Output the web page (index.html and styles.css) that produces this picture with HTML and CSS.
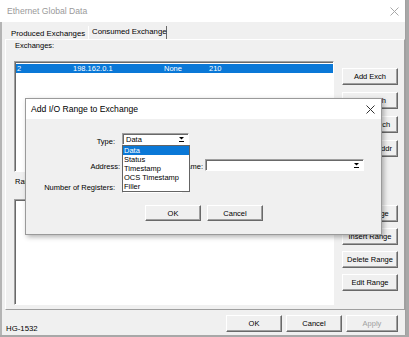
FILE: index.html
```html
<!DOCTYPE html>
<html lang="en">
<head>
    <meta charset="UTF-8">
    <title>Ethernet Global Data</title>
    <link rel="stylesheet" href="styles.css">
</head>
<body>
    <div class="window">
        <div class="titlebar">
            <span class="title">Ethernet Global Data</span>
            <svg class="close" width="9" height="9" viewBox="0 0 9 9"><path d="M0.5 0.5l8 8M8.5 0.5l-8 8" stroke="#a8a8a8" stroke-width="1"/></svg>
        </div>
        <div class="client">
            <div class="tabs">
                <span class="tab">Produced Exchanges</span>
                <span class="tab active">Consumed Exchange</span>
            </div>
            <div class="panel">
                <div class="label">Exchanges:</div>
                <div class="section section-top">
                    <div class="list list-top">
                        <div class="row selected">
                            <span class="c1">2</span>
                            <span class="c2">198.162.0.1</span>
                            <span class="c3">None</span>
                            <span class="c4">210</span>
                        </div>
                    </div>
                    <div class="btns btns-top">
                        <button class="btn">Add Exch</button>
                        <button class="btn">Edit Exch</button>
                        <button class="btn">Delete Exch</button>
                        <button class="btn">Change Addr</button>
                    </div>
                </div>
                <div class="label label-ranges">Ranges:</div>
                <div class="section section-bottom">
                    <div class="list list-bottom"></div>
                    <div class="btns btns-bottom">
                        <button class="btn">Add Range</button>
                        <button class="btn">Insert Range</button>
                        <button class="btn">Delete Range</button>
                        <button class="btn">Edit Range</button>
                    </div>
                </div>
            </div>
            <div class="footer">
                <span class="model">HG-1532</span>
                <div class="footer-btns">
                    <button class="btn">OK</button>
                    <button class="btn">Cancel</button>
                    <button class="btn disabled">Apply</button>
                </div>
            </div>
        </div>

        <div class="dialog">
            <div class="dialog-title">
                <span>Add I/O Range to Exchange</span>
                <svg class="close" width="9" height="9" viewBox="0 0 9 9"><path d="M0.5 0.5l8 8M8.5 0.5l-8 8" stroke="#333" stroke-width="1"/></svg>
            </div>
            <div class="dialog-body">
                <div class="field-row row-type">
                    <span class="field-label">Type:</span>
                    <div class="combo combo-type">
                        <span>Data</span>
                        <svg width="7" height="6" viewBox="0 0 7 6"><path d="M1 1h5L3.5 3.5z" fill="#000"/><path d="M1 5.5h5" stroke="#000"/></svg>
                    </div>
                </div>
                <div class="field-row row-address">
                    <span class="field-label label-address">Address:</span>
                    <div class="edit edit-address"></div>
                    <span class="field-label label-name">Name:</span>
                    <div class="combo combo-name">
                        <span></span>
                        <svg width="7" height="6" viewBox="0 0 7 6"><path d="M1 1h5L3.5 3.5z" fill="#000"/><path d="M1 5.5h5" stroke="#000"/></svg>
                    </div>
                </div>
                <div class="field-row row-count">
                    <span class="field-label">Number of Registers:</span>
                    <div class="edit edit-count"></div>
                </div>
                <div class="dialog-btns">
                    <button class="btn">OK</button>
                    <button class="btn">Cancel</button>
                </div>
            </div>
            <ul class="dropdown">
                <li class="selected">Data</li>
                <li>Status</li>
                <li>Timestamp</li>
                <li>OCS Timestamp</li>
                <li>Filler</li>
            </ul>
        </div>
    </div>
</body>
</html>
```

FILE: styles.css
```css
* {
    box-sizing: border-box;
}
body {
    margin: 0;
    width: 409px;
    height: 337px;
    overflow: hidden;
    background-color: #a8a8a8;
    font-family: "Liberation Sans", Arial, sans-serif;
    font-size: 7.5px;
    color: #000;
}
.window {
    position: relative;
    width: 406px;
    height: 335px;
    display: flex;
    flex-direction: column;
    background-color: #f0f0f0;
    border-right: 1px solid #a0a0a0;
}
.titlebar {
    flex: none;
    height: 22px;
    display: flex;
    align-items: center;
    justify-content: space-between;
    padding: 0 6px 0 7px;
    background: #fff;
}
.titlebar .title {
    font-size: 8.6px;
    color: #9a9a9a;
}
.client {
    flex: 1;
    display: flex;
    flex-direction: column;
    padding: 4px 0 0 3px;
    border-left: 2px solid #b4b4b4;
}
.tabs {
    display: flex;
    align-items: flex-end;
    height: 13px;
    font-size: 7.8px;
}
.tab {
    width: 83px;
    height: 11px;
    line-height: 11px;
    padding-left: 6px;
    white-space: nowrap;
}
.tab.active {
    width: 79px;
    height: 13px;
    line-height: 12px;
    padding-left: 3px;
    border-left: 1px solid #fff;
    border-right: 1px solid #696969;
    position: relative;
    z-index: 1;
}
.panel {
    width: 400px;
    height: 271px;
    padding: 0 0 4px 8px;
    border: 1px solid;
    border-color: #fff #a0a0a0 #a0a0a0 #fff;
}
.label {
    margin-top: 1px;
    padding-left: 1px;
    line-height: 10px;
    height: 10px;
}
.label-ranges {
    margin-top: 5px;
}
.section {
    display: flex;
    align-items: flex-start;
    margin-top: 10px;
}
.section-bottom {
    margin-top: 12px;
}
.list {
    width: 320px;
    background: #fff;
    border: 1px solid;
    border-color: #a0a0a0 #fff #fff #a0a0a0;
    box-shadow: inset 1px 1px 0 #696969;
    padding: 2px 0 0 1px;
}
.list-top {
    height: 111px;
}
.list-bottom {
    height: 106px;
}
.row {
    display: flex;
    height: 9px;
    line-height: 9px;
}
.row.selected {
    background-color: #0a78d7;
    color: #fff;
}
.row span {
    padding-left: 1px;
}
.c1 { width: 56px; }
.c2 { width: 91px; }
.c3 { width: 45px; }
.btns {
    display: flex;
    flex-direction: column;
    margin-left: 8px;
}
.btns-top {
    margin-top: 7px;
    gap: 7px;
}
.btns-bottom {
    margin-top: 6px;
    gap: 6px;
}
.btn {
    width: 56px;
    height: 17px;
    padding: 0;
    font-family: inherit;
    font-size: 7.5px;
    color: #000;
    white-space: nowrap;
    background-color: #f0f0f0;
    border: 1px solid;
    border-color: #fff #696969 #696969 #fff;
    box-shadow: inset -1px -1px 0 #a0a0a0;
}
.btn.disabled {
    color: #a0a0a0;
}
.footer {
    flex: 1;
    display: flex;
    justify-content: space-between;
    padding: 5px 7px 0 1px;
}
.model {
    align-self: flex-end;
    line-height: 10px;
    margin-bottom: 1px;
    font-size: 7.8px;
}
.footer-btns {
    display: flex;
    gap: 4px;
}
.footer-btns .btn:last-child {
    width: 52px;
}

/* modal dialog over the property sheet */
.dialog {
    position: absolute;
    left: 25px;
    top: 98px;
    width: 357px;
    height: 137px;
    background: #f0f0f0;
    border: 1px solid #9a9a9a;
    box-shadow: 2px 2px 5px rgba(0, 0, 0, 0.3);
}
.dialog-title {
    height: 20px;
    display: flex;
    align-items: center;
    justify-content: space-between;
    padding: 0 6px 0 5px;
    background: #fff;
    font-size: 8.6px;
}
.dialog-body {
    display: flex;
    flex-direction: column;
    padding-top: 14px;
}
.field-row {
    display: flex;
    align-items: center;
    height: 12px;
}
.row-address {
    margin-top: 14px;
}
.row-count {
    margin-top: 10px;
}
.field-label {
    width: 89px;
    margin-right: 7px;
    padding-top: 5px;
    text-align: right;
    white-space: nowrap;
}
.label-address {
    width: 94px;
    margin-right: 2px;
    padding-top: 2px;
}
.label-name {
    width: 25px;
    margin-right: 2px;
    padding-top: 2px;
}
.row-count .field-label {
    padding-top: 0;
}
.combo,
.edit {
    height: 12px;
    background: #fff;
    border: 1px solid;
    border-color: #a0a0a0 #fff #fff #a0a0a0;
    box-shadow: inset 1px 1px 0 #696969;
}
.combo {
    display: flex;
    align-items: center;
    justify-content: space-between;
    padding: 0 3px 0 3px;
}
.combo-type {
    width: 67px;
}
.combo-name {
    width: 159px;
}
.edit-address {
    width: 56px;
}
.edit-count {
    width: 60px;
}
.dialog-btns {
    display: flex;
    gap: 6px;
    margin-top: 12px;
    padding-left: 119px;
}
.dialog-btns .btn {
    height: 16px;
}
.dropdown {
    position: absolute;
    left: 96px;
    top: 46px;
    width: 68px;
    margin: 0;
    padding: 0;
    list-style: none;
    background: #fff;
    border: 1px solid #646464;
}
.dropdown li {
    height: 9px;
    line-height: 9px;
    padding-left: 1px;
}
.dropdown li.selected {
    background-color: #0a78d7;
    color: #fff;
}
```
